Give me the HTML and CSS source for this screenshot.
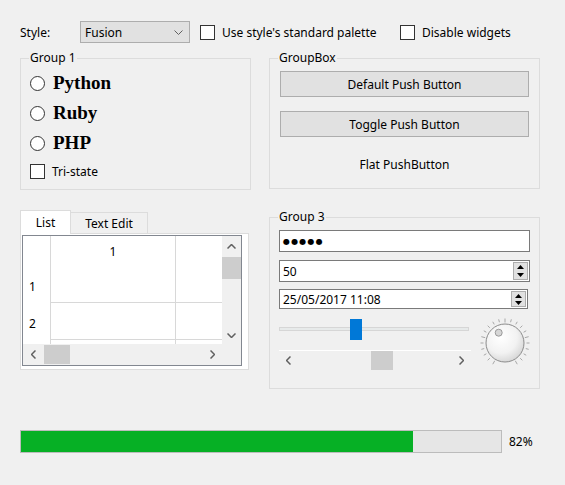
FILE: index.html
```html
<!DOCTYPE html>
<html lang="en">
<head>
  <meta charset="UTF-8" />
  <title>Widget Gallery</title>
  <link rel="stylesheet" href="styles.css">
</head>
<body>
  <div class="toolbar">
    <span class="style-label">Style:</span>
    <div class="combo">
      <span>Fusion</span>
      <svg class="combo-arrow" width="9" height="5" viewBox="0 0 9 5"><polyline points="0.5,0.5 4.5,4.5 8.5,0.5" fill="none" stroke="#606060" stroke-width="1"/></svg>
    </div>
    <label class="check palette"><span class="box"></span>Use style's standard palette</label>
    <label class="check"><span class="box"></span>Disable widgets</label>
  </div>

  <div class="row row-top">
    <div class="group group1">
      <div class="group-title">Group 1</div>
      <label class="radio"><span class="circle"></span>Python</label>
      <label class="radio"><span class="circle"></span>Ruby</label>
      <label class="radio"><span class="circle"></span>PHP</label>
      <label class="check tri"><span class="box"></span>Tri-state</label>
    </div>
    <div class="group groupbox">
      <div class="group-title">GroupBox</div>
      <div class="btn first">Default Push Button</div>
      <div class="btn">Toggle Push Button</div>
      <div class="btn flat">Flat PushButton</div>
    </div>
  </div>

  <div class="row row-bottom">
    <div class="tabwidget">
      <div class="tabs">
        <div class="tab active">List</div>
        <div class="tab">Text Edit</div>
      </div>
      <div class="pane">
        <div class="view">
          <div class="cells">
            <div class="vh"></div>
            <div class="hh col1">1</div>
            <div class="hh"></div>
            <div class="vh num">1</div>
            <div class="cell col1 line"></div>
            <div class="cell line"></div>
            <div class="vh num">2</div>
            <div class="cell col1 line"></div>
            <div class="cell line"></div>
            <div class="vh"></div>
            <div class="cell col1"></div>
            <div class="cell"></div>
          </div>
          <div class="vscroll">
            <div class="sb-btn"><svg width="9" height="5" viewBox="0 0 9 5"><polyline points="0.5,4.5 4.5,0.5 8.5,4.5" fill="none" stroke="#606060" stroke-width="1.5"/></svg></div>
            <div class="sb-handle v"></div>
            <div class="sb-fill"></div>
            <div class="sb-btn end"><svg width="9" height="5" viewBox="0 0 9 5"><polyline points="0.5,0.5 4.5,4.5 8.5,0.5" fill="none" stroke="#606060" stroke-width="1.5"/></svg></div>
          </div>
          <div class="hscroll">
            <div class="sb-btn"><svg width="5" height="9" viewBox="0 0 5 9"><polyline points="4.5,0.5 0.5,4.5 4.5,8.5" fill="none" stroke="#606060" stroke-width="1.5"/></svg></div>
            <div class="sb-handle h"></div>
            <div class="sb-fill"></div>
            <div class="sb-btn"><svg width="5" height="9" viewBox="0 0 5 9"><polyline points="0.5,0.5 4.5,4.5 0.5,8.5" fill="none" stroke="#606060" stroke-width="1.5"/></svg></div>
          </div>
          <div class="corner"></div>
        </div>
      </div>
    </div>

    <div class="group group3">
      <div class="group-title">Group 3</div>
      <div class="field password">●●●●●</div>
      <div class="field spin">
        <span>50</span>
        <div class="spin-btns">
          <svg width="7" height="4" viewBox="0 0 7 4"><polygon points="0,4 3.5,0 7,4" fill="#000"/></svg>
          <svg width="7" height="4" viewBox="0 0 7 4"><polygon points="0,0 3.5,4 7,0" fill="#000"/></svg>
        </div>
      </div>
      <div class="field spin date">
        <span>25/05/2017 11:08</span>
        <div class="spin-btns">
          <svg width="7" height="4" viewBox="0 0 7 4"><polygon points="0,4 3.5,0 7,4" fill="#000"/></svg>
          <svg width="7" height="4" viewBox="0 0 7 4"><polygon points="0,0 3.5,4 7,0" fill="#000"/></svg>
        </div>
      </div>
      <div class="lower">
        <div class="lower-left">
          <div class="slider">
            <div class="groove"></div>
            <div class="handle"></div>
          </div>
          <div class="hbar">
            <div class="sb-btn left"><svg width="5" height="9" viewBox="0 0 5 9"><polyline points="4.5,0.5 0.5,4.5 4.5,8.5" fill="none" stroke="#606060" stroke-width="1.5"/></svg></div>
            <div class="track"><div class="sb-handle bar"></div></div>
            <div class="sb-btn"><svg width="5" height="9" viewBox="0 0 5 9"><polyline points="0.5,0.5 4.5,4.5 0.5,8.5" fill="none" stroke="#606060" stroke-width="1.5"/></svg></div>
          </div>
        </div>
        <svg class="dial" width="50" height="50" viewBox="0 0 50 50">
          <defs>
            <radialGradient id="knob" cx="0.4" cy="0.35" r="0.7">
              <stop offset="0" stop-color="#ffffff"/>
              <stop offset="0.6" stop-color="#f2f2f2"/>
              <stop offset="1" stop-color="#d4d4d4"/>
            </radialGradient>
          </defs>
          <g id="ticks" stroke="#a8a8a8" stroke-width="1"></g>
          <circle cx="25" cy="25" r="19" fill="url(#knob)" stroke="#8c8c8c" stroke-width="1"/>
          <circle cx="18.7" cy="14.7" r="3.5" fill="#d6d6d6" stroke="#9a9a9a" stroke-width="1"/>
        </svg>
      </div>
    </div>
  </div>

  <div class="progress-row">
    <div class="progress"><div class="progress-fill" style="width: 81.6%"></div></div>
    <span class="progress-label">82%</span>
  </div>

  <script>
    // notches around the dial, 300 degrees with a gap at the bottom
    const ticks = document.getElementById("ticks");
    for (let i = 0; i <= 20; i++) {
      const a = (240 - i * 15) * Math.PI / 180;
      const r1 = i % 5 === 0 ? 20.5 : 21.5;
      const r2 = 24.5;
      const line = document.createElementNS("http://www.w3.org/2000/svg", "line");
      line.setAttribute("x1", 25 + r1 * Math.cos(a));
      line.setAttribute("y1", 25 - r1 * Math.sin(a));
      line.setAttribute("x2", 25 + r2 * Math.cos(a));
      line.setAttribute("y2", 25 - r2 * Math.sin(a));
      ticks.appendChild(line);
    }
  </script>
</body>
</html>
```

FILE: styles.css
```css
body {
  margin: 0;
  padding: 21px 0 0 20px;
  background-color: #f0f0f0;
  color: #000;
  font-family: "Noto Sans", sans-serif;
  font-size: 12px;
}
.toolbar {
  display: flex;
  align-items: center;
  height: 22px;
}
.style-label {
  width: 60px;
}
.combo {
  width: 110px;
  height: 22px;
  box-sizing: border-box;
  border: 1px solid #adadad;
  background-color: #e1e1e1;
  padding: 0 6px 0 4px;
  display: flex;
  align-items: center;
  justify-content: space-between;
}
.check {
  display: flex;
  align-items: center;
  gap: 7px;
}
.toolbar .check:first-of-type {
  margin-left: 10px;
}
.check.palette {
  width: 200px;
}
.box {
  width: 15px;
  height: 15px;
  box-sizing: border-box;
  border: 1px solid #333;
  background-color: #fff;
}
.row {
  display: flex;
  align-items: flex-start;
}
.row-top {
  margin-top: 15px;
}
.group {
  border: 1px solid #dcdcdc;
  box-sizing: border-box;
}
.group-title {
  margin: -9px 0 0 8px;
  padding: 0 1px;
  width: max-content;
  line-height: 16px;
  background-color: #f0f0f0;
}
.group1 {
  width: 231px;
  height: 132px;
  margin-right: 18px;
}
.group1 .group-title {
  margin-bottom: 2px;
}
.radio {
  display: flex;
  align-items: center;
  gap: 8px;
  height: 30px;
  padding-left: 9px;
  font-family: "Liberation Serif", serif;
  font-weight: bold;
  font-size: 19px;
}
.circle {
  width: 15px;
  height: 15px;
  box-sizing: border-box;
  border: 1px solid #333;
  border-radius: 50%;
  background-color: #fff;
}
.check.tri {
  height: 26px;
  padding-left: 9px;
}
.groupbox {
  width: 271px;
  height: 131px;
}
.btn {
  width: 249px;
  height: 26px;
  box-sizing: border-box;
  margin: 14px 0 0 10px;
  border: 1px solid #adadad;
  background-color: #e1e1e1;
  display: flex;
  align-items: center;
  justify-content: center;
}
.btn.first {
  margin-top: 5px;
}
.btn.flat {
  border-color: transparent;
  background: none;
}
.row-bottom {
  margin-top: 20px;
}
.tabwidget {
  width: 229px;
  margin-right: 20px;
}
.tabs {
  display: flex;
  align-items: flex-end;
  height: 23px;
}
.tab {
  height: 21px;
  box-sizing: border-box;
  border: 1px solid #dcdcdc;
  border-bottom: none;
  background-color: #f0f0f0;
  display: flex;
  align-items: center;
  justify-content: center;
  width: 78px;
  margin-left: -1px;
}
.tab.active {
  width: 51px;
  height: 24px;
  margin: 0 0 -1px 0;
  background-color: #fff;
  position: relative;
  z-index: 1;
}
.pane {
  height: 137px;
  box-sizing: border-box;
  border: 1px solid #dcdcdc;
  background-color: #fff;
  padding: 1px;
}
.view {
  width: 220px;
  height: 131px;
  box-sizing: border-box;
  border: 1px solid #828790;
  display: grid;
  grid-template-columns: 199px 19px;
  grid-template-rows: 108px 21px;
}
.cells {
  display: grid;
  grid-template-columns: 27px 126px 46px;
  grid-template-rows: 30px 37px 37px 4px;
  overflow: hidden;
}
.cells > div {
  box-sizing: border-box;
}
.col1 {
  border-left: 1px solid #d8d8d8;
  border-right: 1px solid #d8d8d8;
}
.line {
  border-bottom: 1px solid #d8d8d8;
}
.hh {
  display: flex;
  align-items: center;
  justify-content: center;
}
.vh.num {
  display: flex;
  align-items: center;
  padding: 4px 0 0 6px;
}
.vscroll {
  background-color: #f0f0f0;
  display: flex;
  flex-direction: column;
  align-items: center;
}
.vscroll .sb-btn {
  height: 20px;
  width: 100%;
  display: flex;
  align-items: center;
  justify-content: center;
}
.vscroll .sb-btn.end {
  height: 18px;
}
.sb-fill {
  flex: 1;
}
.sb-handle {
  background-color: #cdcdcd;
}
.sb-handle.v {
  width: 100%;
  height: 22px;
  margin-top: 1px;
}
.hscroll {
  background-color: #f0f0f0;
  display: flex;
  align-items: stretch;
}
.hscroll .sb-btn {
  width: 20px;
  display: flex;
  align-items: center;
  justify-content: center;
}
.sb-handle.h {
  width: 26px;
  margin: 1px 0 1px 1px;
}
.corner {
  background-color: #f0f0f0;
}
.group3 {
  width: 271px;
  height: 172px;
  margin-top: 7px;
  padding-left: 9px;
}
.group3 .group-title {
  margin-left: -1px;
}
.field {
  box-sizing: border-box;
  border: 1px solid #7a7a7a;
  background-color: #fff;
  display: flex;
  align-items: center;
  padding-left: 3px;
}
.password {
  width: 251px;
  height: 22px;
  margin-top: 5px;
  font-family: "DejaVu Sans", sans-serif;
  font-size: 8px;
  letter-spacing: 1.2px;
}
.spin {
  width: 251px;
  height: 22px;
  margin-top: 8px;
  justify-content: space-between;
  padding-right: 1px;
}
.spin.date {
  width: 249px;
  height: 20px;
  margin-top: 7px;
}
.spin-btns {
  width: 15px;
  height: 18px;
  box-sizing: border-box;
  border: 1px solid #adadad;
  background-color: #e1e1e1;
  display: flex;
  flex-direction: column;
  align-items: center;
  justify-content: space-around;
}
.date .spin-btns {
  height: 16px;
}
.lower {
  display: flex;
  margin-top: 9px;
}
.lower-left {
  width: 192px;
}
.slider {
  height: 22px;
  display: flex;
  align-items: center;
}
.groove {
  width: 190px;
  height: 4px;
  box-sizing: border-box;
  border: 1px solid #d6d6d6;
  background-color: #e7eaea;
}
.handle {
  width: 12px;
  height: 21px;
  background-color: #0078d7;
  margin-left: -119px;
}
.hbar {
  margin-top: 10px;
  height: 20px;
  box-sizing: border-box;
  border-top: 1px solid #fff;
  display: flex;
}
.hbar .sb-btn {
  width: 20px;
  display: flex;
  align-items: center;
  justify-content: center;
}
.hbar .sb-btn.left {
  width: 18px;
}
.track {
  flex: 1;
}
.sb-handle.bar {
  width: 22px;
  height: 19px;
  margin-left: 74px;
}
.dial {
  margin-left: 9px;
}
.progress-row {
  display: flex;
  align-items: center;
  margin-top: 41px;
}
.progress {
  width: 482px;
  height: 23px;
  box-sizing: border-box;
  border: 1px solid #bcbcbc;
  background-color: #e6e6e6;
}
.progress-fill {
  height: 100%;
  background-color: #06b025;
}
.progress-label {
  margin-left: 7px;
}
```
